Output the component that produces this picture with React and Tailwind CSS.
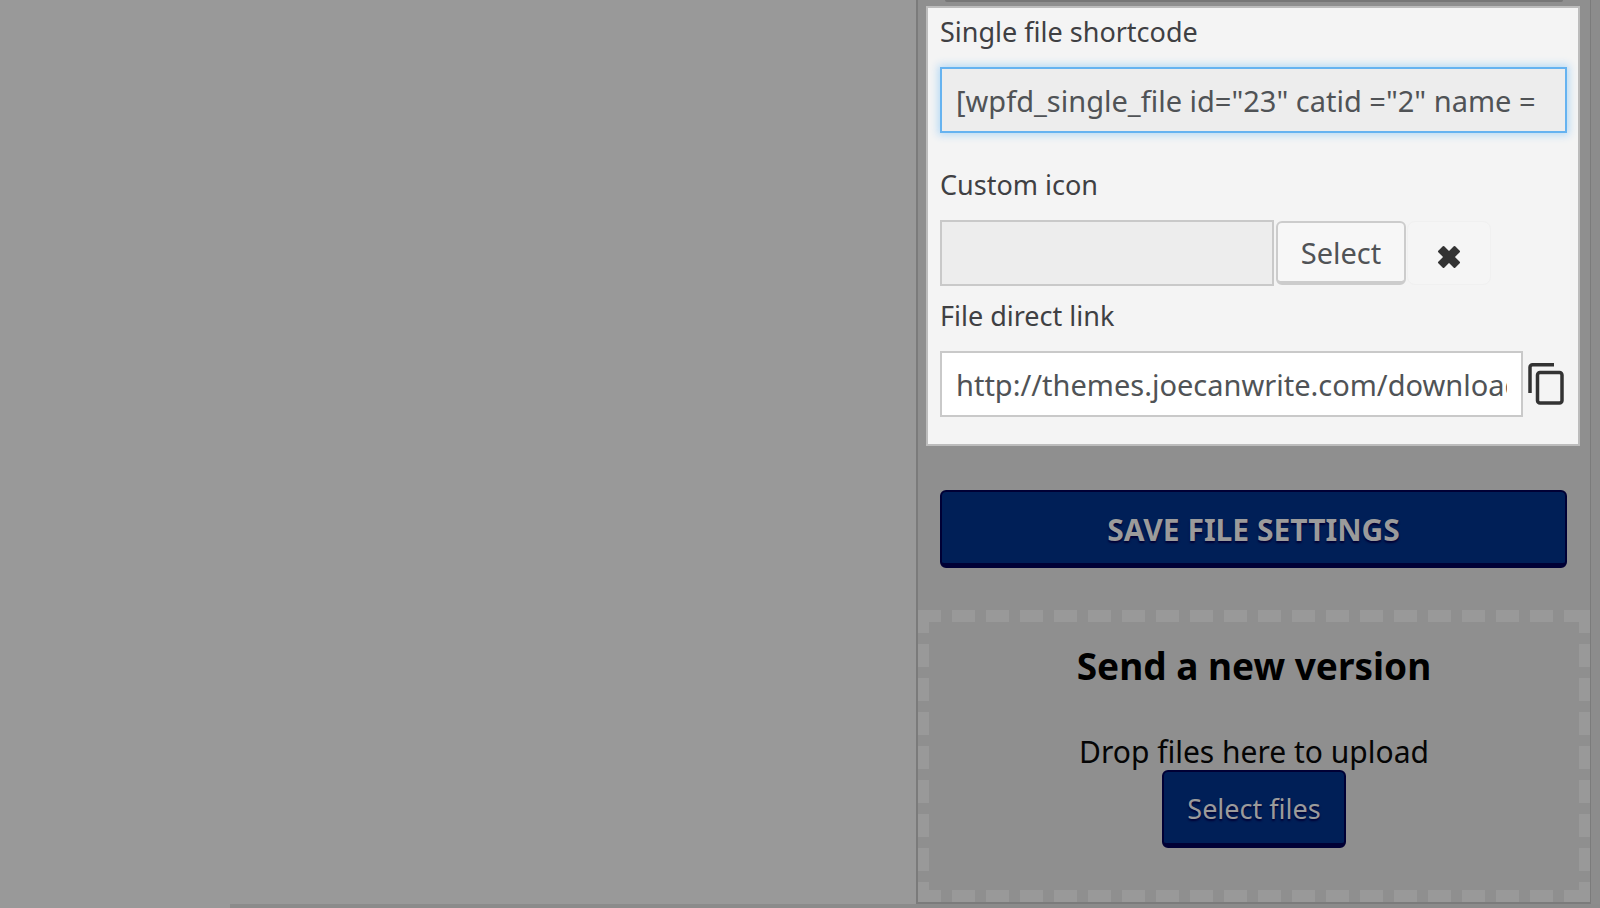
import React, { useState } from 'react';

function CopyIcon() {
  return (
    <svg viewBox="0 0 36 42" className="w-9 h-[42px]" fill="none" stroke="#333" strokeWidth="3.500">
      <path d="M26 1.800H4.500a2.500 2.500 0 0 0-2.500 2.500V30" />
      <rect x="9.500" y="9.500" width="24.500" height="30.500" rx="2.500" />
    </svg>
  );
}

function CrossIcon() {
  return (
    <svg viewBox="0 0 24 24" className="w-6 h-6" fill="#333" stroke="#333" strokeWidth="2" strokeLinejoin="round">
      <path d="M6.500 2L12 7.500 17.500 2 22 6.500 16.500 12 22 17.500 17.500 22 12 16.500 6.500 22 2 17.500 7.500 12 2 6.500z" />
    </svg>
  );
}

const labelClass = 'block text-[27px] leading-[36px] text-[#3f4043]';
const inputClass = 'h-[66px] border-2 px-[14px] text-[29px] text-[#505356] outline-none';
const primaryClass =
  'h-[78px] rounded-md border-2 border-b-[5px] border-[#000035] bg-[#001f57] pt-1 text-[#9b9b9b] [text-shadow:0_2px_2px_#000035]';

// long dashes along the four edges of the drop zone
const dashClass =
  'bg-[linear-gradient(90deg,#999_23px,transparent_0),linear-gradient(90deg,#999_23px,transparent_0),linear-gradient(#999_23px,transparent_0),linear-gradient(#999_23px,transparent_0)] [background-size:34px_12px,34px_12px,11px_34px,11px_34px] [background-position:left_top,left_bottom,left_top,right_top] [background-repeat:repeat-x,repeat-x,repeat-y,repeat-y]';

export default function App() {
  const [shortcode, setShortcode] = useState('[wpfd_single_file id="23" catid ="2" name =');
  const [icon, setIcon] = useState('');
  const [link, setLink] = useState('http://themes.joecanwrite.com/download/2/files/23');

  return (
    <div className="flex min-h-screen flex-col overflow-hidden bg-[#999] font-['Noto_Sans','Open_Sans',sans-serif]">
      <div className="flex flex-1">
        <main className="flex-1" />

        <aside className="w-[675px] border-l-2 border-r border-b-2 border-[#7b7b7b] bg-[#8f8f8f]">
          <div className="mx-[27px] h-[2px] rounded-b bg-[#777]" />

          {/* File settings */}
          <section className="mt-1 mr-[10px] ml-2 border-2 border-[#bcbcbc] bg-[#f4f4f4] pt-[6px] pr-[11px] pb-[27px] pl-3">
            <label htmlFor="shortcode" className={labelClass}>Single file shortcode</label>
            <input
              id="shortcode"
              type="text"
              value={shortcode}
              onChange={(e) => setShortcode(e.target.value)}
              className={inputClass + ' mt-[17px] block w-full border-[#66b3f0] bg-[#ededed] shadow-[0_0_8px_2px_#b5d9f5]'}
            />

            <label htmlFor="icon" className={labelClass + ' mt-[34px]'}>Custom icon</label>
            <div className="mt-[17px] flex items-center">
              <input
                id="icon"
                type="text"
                value={icon}
                onChange={(e) => setIcon(e.target.value)}
                className={inputClass + ' w-[334px] border-[#c9c9c9] bg-[#ededed]'}
              />
              <button
                type="button"
                className="ml-[2px] h-16 w-[130px] rounded-md border-2 border-b-4 border-[#ccc] bg-[#f7f7f7] text-[29px] leading-none text-[#505356]"
              >
                Select
              </button>
              <button
                type="button"
                aria-label="Clear icon"
                onClick={() => setIcon('')}
                className="ml-px flex h-16 w-[84px] items-center justify-center rounded-lg border border-[#f0f0f0] bg-[#f5f5f5] pt-2"
              >
                <CrossIcon />
              </button>
            </div>

            <label htmlFor="link" className={labelClass + ' mt-3'}>File direct link</label>
            <div className="mt-[17px] flex items-center gap-[5px]">
              <input
                id="link"
                type="text"
                value={link}
                onChange={(e) => setLink(e.target.value)}
                className={inputClass + ' min-w-0 flex-1 border-[#c9c9c9] bg-white'}
              />
              <button type="button" aria-label="Copy link" className="mr-[3px]">
                <CopyIcon />
              </button>
            </div>
          </section>

          <div className="pt-11 pr-[23px] pl-[22px]">
            <button type="button" className={primaryClass + ' w-full text-[30px] font-bold'}>
              SAVE FILE SETTINGS
            </button>
          </div>

          {/* Drop zone */}
          <section className={'mt-[42px] flex flex-col items-center pt-[33px] pb-[54px] ' + dashClass}>
            <h2 className="text-[37px] leading-[46px] font-bold text-black">Send a new version</h2>
            <p className="mt-[45px] text-[30px] leading-[36px] text-[#050505]">Drop files here to upload</p>
            <button type="button" className={primaryClass + ' w-[184px] text-[27px]'}>
              Select files
            </button>
          </section>
        </aside>

        <div className="w-[9px] bg-[#8c8c8c]" />
      </div>
      <div className="ml-[230px] h-1 bg-[#8b8b8b]" />
    </div>
  );
}
